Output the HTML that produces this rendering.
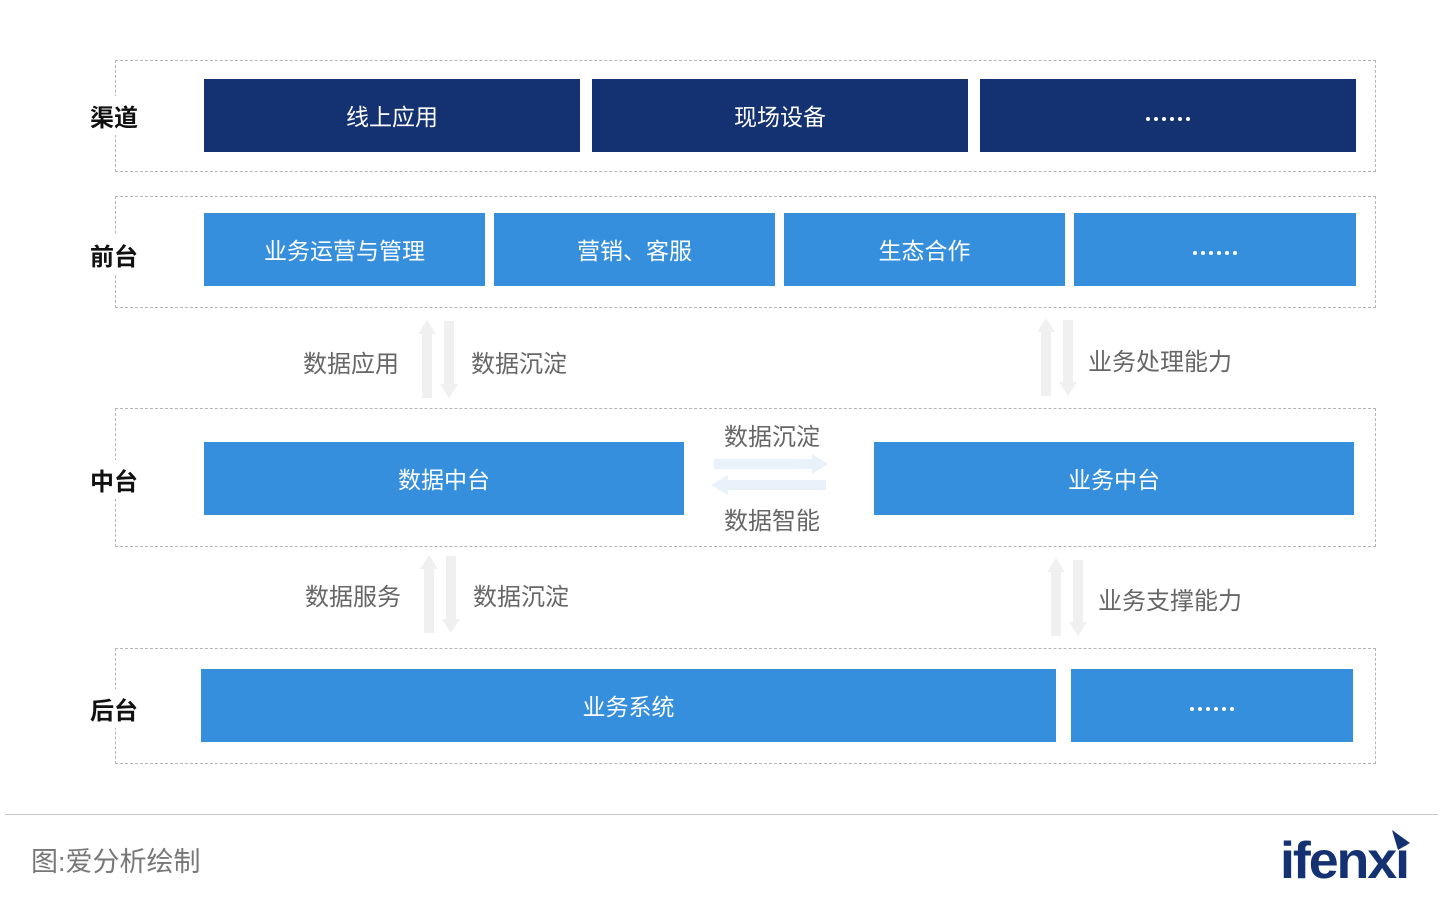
<!DOCTYPE html>
<html><head><meta charset="utf-8"><style>
body{margin:0;width:1440px;height:909px;background:#fff;position:relative;overflow:hidden;font-family:"Liberation Sans","Noto Sans CJK SC",sans-serif}
.d{position:absolute;border:1px dashed #b5b5b5;box-sizing:border-box}
.b{position:absolute;color:#fff;font-size:23px;display:flex;align-items:center;justify-content:center;padding-bottom:2px;box-sizing:border-box}
.n{background:#143172}.l{background:#358fdc}
.dots span{display:inline-block;width:4px;height:4px;border-radius:2px;background:#fff;margin:0 2px;position:relative;top:4px}
.lb{position:absolute;left:90px;font-size:24px;font-weight:bold;color:#111;background:#fff;padding:2px 0}
.t{position:absolute;font-size:24px;color:#666}
svg{position:absolute;left:0;top:0}
</style></head><body>
<div class="d" style="left:115px;top:60px;width:1261px;height:112px"></div>
<div class="d" style="left:115px;top:196px;width:1261px;height:112px"></div>
<div class="d" style="left:115px;top:408px;width:1261px;height:139px"></div>
<div class="d" style="left:115px;top:648px;width:1261px;height:116px"></div>
<div class="lb" style="top:96px">渠道</div>
<div class="lb" style="top:235px">前台</div>
<div class="lb" style="top:460px">中台</div>
<div class="lb" style="top:689px">后台</div>
<div class="b n" style="left:204px;top:79px;width:376px;height:73px">线上应用</div>
<div class="b n" style="left:592px;top:79px;width:376px;height:73px">现场设备</div>
<div class="b n dots" style="left:980px;top:79px;width:376px;height:73px"><span></span><span></span><span></span><span></span><span></span><span></span></div>
<div class="b l" style="left:204px;top:213px;width:281px;height:73px">业务运营与管理</div>
<div class="b l" style="left:494px;top:213px;width:281px;height:73px">营销、客服</div>
<div class="b l" style="left:784px;top:213px;width:281px;height:73px">生态合作</div>
<div class="b l dots" style="left:1074px;top:213px;width:282px;height:73px"><span></span><span></span><span></span><span></span><span></span><span></span></div>
<div class="b l" style="left:204px;top:442px;width:480px;height:73px">数据中台</div>
<div class="b l" style="left:874px;top:442px;width:480px;height:73px">业务中台</div>
<div class="b l" style="left:201px;top:669px;width:855px;height:73px">业务系统</div>
<div class="b l dots" style="left:1071px;top:669px;width:282px;height:73px"><span></span><span></span><span></span><span></span><span></span><span></span></div>
<div class="t" style="left:303px;top:344px">数据应用</div>
<div class="t" style="left:471px;top:344px">数据沉淀</div>
<div class="t" style="left:1088px;top:342px">业务处理能力</div>
<div class="t" style="left:724px;top:417px">数据沉淀</div>
<div class="t" style="left:724px;top:501px">数据智能</div>
<div class="t" style="left:305px;top:577px">数据服务</div>
<div class="t" style="left:473px;top:577px">数据沉淀</div>
<div class="t" style="left:1098px;top:581px">业务支撑能力</div>
<svg width="1440" height="909">
<g fill="#f0f0f0">
<polygon points="422,398 422,334 418,334 427,320 436,334 432,334 432,398"/>
<polygon points="444,321 454,321 454,384 458,384 449,398 440,384 444,384"/>
<polygon points="1041,396 1041,332 1037,332 1046,318 1055,332 1051,332 1051,396"/>
<polygon points="1063,320 1073,320 1073,382 1077,382 1068,396 1059,382 1063,382"/>
<polygon points="424,633 424,569 420,569 429,555 438,569 434,569 434,633"/>
<polygon points="446,556 456,556 456,619 460,619 451,633 442,619 446,619"/>
<polygon points="1051,636 1051,572 1047,572 1056,558 1065,572 1061,572 1061,636"/>
<polygon points="1073,560 1083,560 1083,622 1087,622 1078,636 1069,622 1073,622"/>
</g>
<g fill="#e9f1fa">
<polygon points="714,459 812,459 812,454 828,464 812,474 812,469 714,469"/>
<polygon points="826,480 728,480 728,475 711,485 728,495 728,490 826,490"/>
</g>
<line x1="5" y1="814.5" x2="1438" y2="814.5" stroke="#c8c8c8"/>
<text x="1280" y="878" font-family="Liberation Sans, sans-serif" font-weight="bold" font-size="52" fill="#143172" letter-spacing="-2" textLength="128" lengthAdjust="spacingAndGlyphs">ifenxi</text>
<polygon points="1392,830 1410,843 1398,850" fill="#143172"/>
</svg>
<div class="t" style="left:31px;top:840px;font-size:27px;color:#777">图:爱分析绘制</div>
</body></html>
